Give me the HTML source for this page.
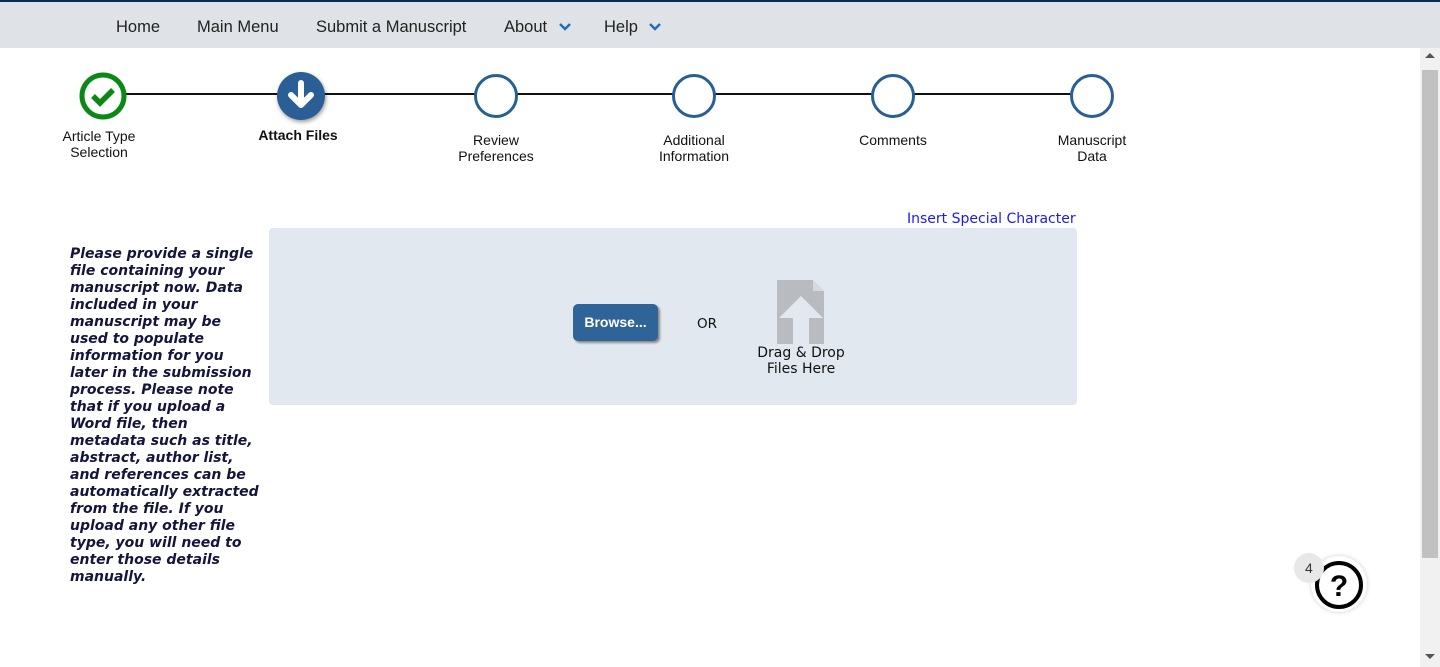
<!DOCTYPE html>
<html><head><meta charset="utf-8"><style>
body{margin:0;width:1440px;height:667px;overflow:hidden;background:#fff;font-family:"Liberation Sans",Arial,sans-serif;position:relative}
.nav{position:absolute;left:0;top:0;width:1440px;height:48px;background:#dfe2e6;border-top:2px solid #0b2a55;box-sizing:border-box}
.nav span{position:absolute;top:16px;font-size:16.5px;color:#222}
.nav svg{position:absolute;top:20px}
.line{position:absolute;left:103px;top:93px;width:990px;height:2px;background:#111}
.c{position:absolute;width:44px;height:44px;border-radius:50%;box-sizing:border-box}
.o{border:3px solid #2a5f95;background:#fff}
.lbl{position:absolute;font-size:14px;color:#111;text-align:center;width:140px;line-height:16px}
.txt{position:absolute;left:70px;top:246px;width:192px;font-family:"DejaVu Sans",sans-serif;font-size:14px;font-weight:bold;font-style:italic;color:#14143c;line-height:17px}
.box{position:absolute;left:269px;top:228px;width:808px;height:177px;background:#e1e8f0;border-radius:4px}
.sb{position:absolute;left:1420px;top:48px;width:20px;height:619px;background:#f1f1f1}
</style></head><body>
<div class="nav">
<span style="left:116px">Home</span>
<span style="left:197px">Main Menu</span>
<span style="left:316px">Submit a Manuscript</span>
<span style="left:504px">About</span>
<svg style="left:558px" width="14" height="10"><path d="M2 2l5 5 5-5" stroke="#1f6fb8" stroke-width="2.5" fill="none"/></svg>
<span style="left:604px">Help</span>
<svg style="left:648px" width="14" height="10"><path d="M2 2l5 5 5-5" stroke="#1f6fb8" stroke-width="2.5" fill="none"/></svg>
</div>
<div class="line"></div>
<svg style="position:absolute;left:79px;top:72px" width="48" height="48"><circle cx="24" cy="24" r="21" fill="#fff" stroke="#0a8a14" stroke-width="5"/><path d="M14 24l7 7 13-13" stroke="#0a8a14" stroke-width="5.5" fill="none"/></svg>
<svg style="position:absolute;left:275px;top:70px;filter:drop-shadow(1px 2px 2px rgba(0,0,0,.4))" width="52" height="52"><circle cx="26" cy="26" r="24" fill="#2a5f95"/><path d="M26 13v22M16 25l10 10 10-10" stroke="#fff" stroke-width="6" fill="none" stroke-linecap="round" stroke-linejoin="round"/></svg>
<div class="c o" style="left:474px;top:74px"></div>
<div class="c o" style="left:672px;top:74px"></div>
<div class="c o" style="left:871px;top:74px"></div>
<div class="c o" style="left:1070px;top:74px"></div>
<div class="lbl" style="left:29px;top:128px">Article Type<br>Selection</div>
<div class="lbl" style="left:228px;top:127px;font-weight:bold">Attach Files</div>
<div class="lbl" style="left:426px;top:132px">Review<br>Preferences</div>
<div class="lbl" style="left:624px;top:132px">Additional<br>Information</div>
<div class="lbl" style="left:823px;top:132px">Comments</div>
<div class="lbl" style="left:1022px;top:132px">Manuscript<br>Data</div>
<div style="position:absolute;left:907px;top:211px;font-family:'DejaVu Sans',sans-serif;font-size:14px;color:#1a1aee">Insert Special Character</div>
<div class="txt">Please provide a single file containing your manuscript now. Data included in your manuscript may be used to populate information for you later in the submission process. Please note that if you upload a Word file, then metadata such as title, abstract, author list, and references can be automatically extracted from the file. If you upload any other file type, you will need to enter those details manually.</div>
<div class="box"></div>
<div style="position:absolute;left:573px;top:304px;width:85px;height:37px;background:#2f6499;border-radius:5px;box-shadow:2px 2px 2px #888;color:#fff;font-weight:bold;font-size:14px;text-align:center;line-height:37px">Browse...</div>
<div style="position:absolute;left:697px;top:316px;font-family:'DejaVu Sans',sans-serif;font-size:13.5px;color:#111">OR</div>
<svg style="position:absolute;left:777px;top:280px" width="48" height="64"><path d="M0 0h36l11 11v53H0z" fill="#b8bcc0"/><path d="M36 0l11 11h-11z" fill="#d6dade"/><path d="M24 16l-22 22h14v26h16v-26h14z" fill="#e1e8f0"/></svg>
<div style="position:absolute;left:721px;top:345px;width:160px;text-align:center;font-family:'DejaVu Sans',sans-serif;font-size:14px;color:#111;line-height:16px">Drag &amp; Drop<br>Files Here</div>
<div class="sb"><div style="position:absolute;left:2px;top:22px;width:16px;height:488px;background:#c1c1c1"></div>
<svg style="position:absolute;left:5px;top:4px" width="10" height="8"><path d="M0 6l5-5 5 5z" fill="#555"/></svg>
<svg style="position:absolute;left:5px;top:605px" width="10" height="8"><path d="M0 1l5 5 5-5z" fill="#555"/></svg></div>
<svg style="position:absolute;left:1292px;top:550px" width="80" height="68"><circle cx="47" cy="34" r="28" fill="#fff" style="filter:drop-shadow(0 0 2px #ccc)"/><circle cx="47" cy="35" r="22" fill="none" stroke="#000" stroke-width="4"/><text x="47" y="46" text-anchor="middle" font-family="Liberation Sans" font-weight="bold" font-size="30">?</text><circle cx="17" cy="18" r="15" fill="#e8e8e8"/><text x="13" y="23" font-family="Liberation Sans" font-size="14" fill="#333">4</text></svg>
</body></html>
